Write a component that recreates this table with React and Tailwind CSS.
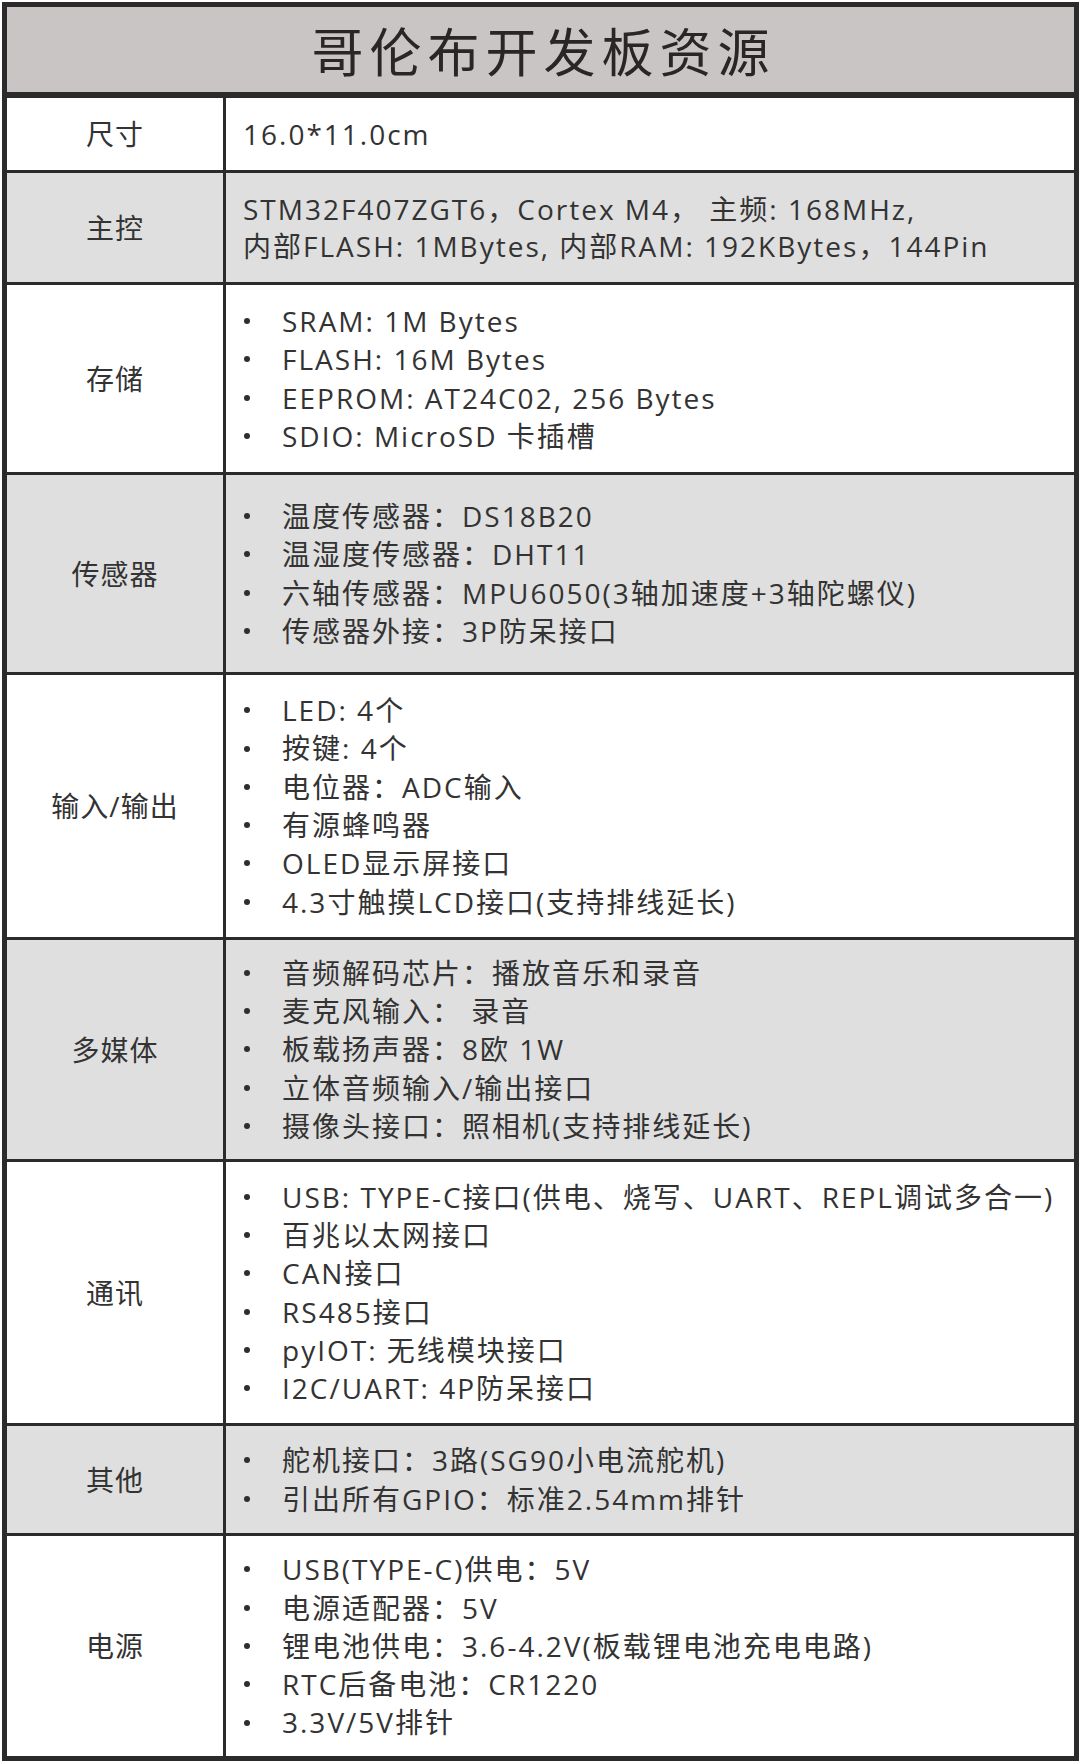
const rows = [
  { label: '尺寸', h: 'h-[75px]', shade: false, plain: ['16.0*11.0cm'] },
  {
    label: '主控',
    h: 'h-[112px]',
    shade: true,
    plain: [
      'STM32F407ZGT6，Cortex M4， 主频: 168MHz,',
      '内部FLASH: 1MBytes, 内部RAM: 192KBytes，144Pin',
    ],
  },
  {
    label: '存储',
    h: 'h-[190px]',
    shade: false,
    items: ['SRAM: 1M Bytes', 'FLASH: 16M Bytes', 'EEPROM: AT24C02, 256 Bytes', 'SDIO: MicroSD 卡插槽'],
  },
  {
    label: '传感器',
    h: 'h-[200px]',
    shade: true,
    items: ['温度传感器：DS18B20', '温湿度传感器：DHT11', '六轴传感器：MPU6050(3轴加速度+3轴陀螺仪)', '传感器外接：3P防呆接口'],
  },
  {
    label: '输入/输出',
    h: 'h-[265px]',
    shade: false,
    items: ['LED: 4个', '按键: 4个', '电位器：ADC输入', '有源蜂鸣器', 'OLED显示屏接口', '4.3寸触摸LCD接口(支持排线延长)'],
  },
  {
    label: '多媒体',
    h: 'h-[222px]',
    shade: true,
    items: ['音频解码芯片：播放音乐和录音', '麦克风输入： 录音', '板载扬声器：8欧 1W', '立体音频输入/输出接口', '摄像头接口：照相机(支持排线延长)'],
  },
  {
    label: '通讯',
    h: 'h-[264px]',
    shade: false,
    items: ['USB: TYPE-C接口(供电、烧写、UART、REPL调试多合一)', '百兆以太网接口', 'CAN接口', 'RS485接口', 'pyIOT: 无线模块接口', 'I2C/UART: 4P防呆接口'],
  },
  {
    label: '其他',
    h: 'h-[110px]',
    shade: true,
    items: ['舵机接口：3路(SG90小电流舵机)', '引出所有GPIO：标准2.54mm排针'],
  },
  {
    label: '电源',
    h: 'h-[220px]',
    shade: false,
    last: true,
    items: ['USB(TYPE-C)供电：5V', '电源适配器：5V', '锂电池供电：3.6-4.2V(板载锂电池充电电路)', 'RTC后备电池：CR1220', '3.3V/5V排针'],
  },
];

function Row({ row }) {
  return (
    <div
      className={`flex ${row.h} ${row.last ? '' : 'border-b-[3px] border-[#2b2b2b]'} ${
        row.shade ? 'bg-[#dfdfdf]' : 'bg-white'
      }`}
    >
      <div className="w-[219px] shrink-0 border-r-[3px] border-[#2b2b2b] flex items-center justify-center tracking-[1px]">
        {row.label}
      </div>
      <div className="flex-1 flex flex-col justify-center">
        {row.plain && (
          <div className="pl-[17px] leading-[37px] whitespace-nowrap">
            {row.plain.map((t, i) => (
              <div key={i}>{t}</div>
            ))}
          </div>
        )}
        {row.items && (
          <ul className="leading-[38.3px]">
            {row.items.map((t, i) => (
              <li key={i} className="flex items-center whitespace-nowrap">
                <span className="ml-[18px] mr-[32px] w-[6px] h-[6px] rounded-full bg-[#2e2e2e] shrink-0" />
                <span>{t}</span>
              </li>
            ))}
          </ul>
        )}
      </div>
    </div>
  );
}

export default function App() {
  return (
    <div className="w-[1080px] h-[1763px] bg-white pt-[2px] pl-[2px] pr-[1px] font-['Open_Sans','Noto_Sans_CJK_SC',sans-serif] text-[28px] tracking-[2px] text-[#333333]">
      <div className="border-[5px] border-[#2b2b2b] flex flex-col">
        <div className="h-[91px] bg-[#c9c5c4] border-b-[6px] border-[#2b2b2b] flex items-center justify-center">
          <h1 className="font-['Noto_Sans_CJK_SC',sans-serif] font-normal text-[52px] tracking-[6px] pl-[6px] text-[#2a2626] leading-none">
            哥伦布开发板资源
          </h1>
        </div>
        {rows.map((row) => (
          <Row key={row.label} row={row} />
        ))}
      </div>
    </div>
  );
}
